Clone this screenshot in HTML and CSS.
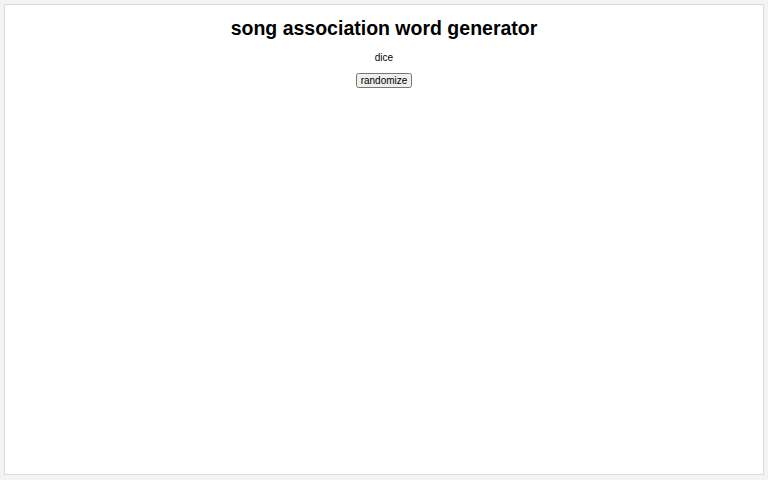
FILE: index.html
```html
<!DOCTYPE html>
<html lang="en">
<head>
  <meta charset="UTF-8" />
  <meta name="viewport" content="width=device-width, initial-scale=1.0" />
  <title>song association</title>
  <link rel="stylesheet" href="styles.css">
</head>
<body>
  <div class="container">
    <h1>song association word generator</h1>
    <p id="palavra">dice</p>
    <button id="randomize">randomize</button>
  </div>

  <script>
    const palavras = ["dice", "love", "rain", "night", "summer", "fire", "home", "dance", "heart", "road"];
    const palavra = document.getElementById("palavra");

    document.getElementById("randomize").addEventListener("click", () => {
      palavra.textContent = palavras[Math.floor(Math.random() * palavras.length)];
    });
  </script>
</body>
</html>
```

FILE: styles.css
```css
body {
  margin: 0;
  padding: 4px 4px 5px 4px;
  box-sizing: border-box;
  height: 100vh;
  background-color: #f3f3f3;
  font-family: "Liberation Sans", Arial, sans-serif;
}

.container {
  box-sizing: border-box;
  height: 100%;
  background-color: #fff;
  border: 1px solid #dcdcdc;
  display: flex;
  flex-direction: column;
  align-items: center;
}

h1 {
  margin: 12px 0 0 0;
  font-size: 19.5px;
  font-weight: bold;
  color: #000;
}

#palavra {
  margin: 12px 0 0 0;
  font-size: 10px;
}

button {
  margin-top: 10px;
  font-family: "Liberation Sans", Arial, sans-serif;
  font-size: 10px;
  padding: 0 3px;
}
```
